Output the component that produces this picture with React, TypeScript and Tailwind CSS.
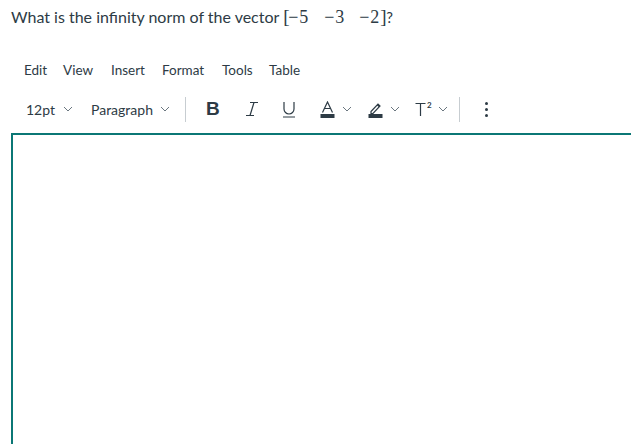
import React from "react";

const Chevron = () => (
  <svg width="10" height="6" viewBox="0 0 10 6" className="text-[#6b7780]">
    <path d="M1 1l4 4 4-4" fill="none" stroke="currentColor" strokeWidth="1" />
  </svg>
);

const serif = { fontFamily: "'Liberation Serif', 'DejaVu Serif', serif" };

export default function App() {
  return (
    <div className="w-[631px] h-[444px] overflow-hidden bg-white text-[#2d3b45]" style={{ fontFamily: "Lato, 'Noto Sans', sans-serif" }}>
      <div className="pl-[11px] pt-[6px] h-[28px] text-[16px] leading-[20px] flex items-center whitespace-nowrap">
        <span>What is the infinity norm of the vector</span>
        <span className="ml-[4px] flex items-center text-[18px] leading-[20px]" style={serif}>
          <span className="w-[4px] text-[19px]">[</span>
          <span className="w-[12px] text-center">−</span>
          <span className="w-[24px]">5</span>
          <span className="w-[12px] text-center">−</span>
          <span className="w-[23px]">3</span>
          <span className="w-[12px] text-center">−</span>
          <span className="w-[10px]">2</span>
          <span className="w-[6px] text-[19px]">]</span>
        </span>
        <span className="text-[15px]">?</span>
      </div>

      <div className="pl-[24px] mt-[32px] flex items-center text-[13.5px] h-[20px]">
        <span className="w-[39px]">Edit</span>
        <span className="w-[48px]">View</span>
        <span className="w-[51px]">Insert</span>
        <span className="w-[60px]">Format</span>
        <span className="w-[47px]">Tools</span>
        <span>Table</span>
      </div>

      <div className="pl-[26px] mt-[16px] flex items-center h-[26px] text-[14px]">
        <span className="w-[65px] flex items-center gap-[8px]">12pt <Chevron /></span>
        <span className="w-[94px] flex items-center gap-[7px]">Paragraph <Chevron /></span>
        <span className="w-px h-[25px] bg-[#c7cdd1]" />
        <span className="ml-[20px] w-[39px] font-bold text-[19px] leading-[20px]" style={{ fontFamily: "'Liberation Sans', sans-serif" }}>B</span>
        <span className="w-[37px] flex">
          <svg width="14" height="16" viewBox="0 0 14 16"><path d="M5 1.5h8M1 14.5h8M9 1.5l-4 13" fill="none" stroke="#2d3b45" strokeWidth="1.2" /></svg>
        </span>
        <span className="w-[38px] flex">
          <svg width="14" height="17" viewBox="0 0 14 17"><path d="M2 1v7a5 5 0 0 0 10 0V1M1 16h12" fill="none" stroke="#2d3b45" strokeWidth="1.2" /></svg>
        </span>
        <span className="w-[48px] flex items-center gap-[7px]">
          <svg width="15" height="17" viewBox="0 0 15 17"><path d="M2.5 11.5L7.5 1l5 10.5M4.3 7.5h6.4" fill="none" stroke="#2d3b45" strokeWidth="1.2" /><rect x="0.5" y="13" width="14" height="4" fill="#2d3b45" /></svg>
          <Chevron />
        </span>
        <span className="w-[47px] flex items-center gap-[7px]">
          <svg width="15" height="17" viewBox="0 0 15 17"><path d="M3 10.5l7-7.5 2 2-7 7.5H3z M9 3.5l2 2" fill="none" stroke="#2d3b45" strokeWidth="1.2" /><rect x="0.5" y="13" width="14" height="4" fill="#2d3b45" /></svg>
          <Chevron />
        </span>
        <span className="w-[44px] flex items-center gap-[6px]">
          <span className="flex items-start">
            <svg width="11" height="14" viewBox="0 0 11 14"><path d="M0.5 1.5h10M5.5 1.5V14" fill="none" stroke="#2d3b45" strokeWidth="1.2" /></svg>
            <span className="text-[8px] leading-[8px] font-bold -mt-[1px] ml-[1px]">2</span>
          </span>
          <Chevron />
        </span>
        <span className="w-px h-[25px] bg-[#c7cdd1]" />
        <span className="ml-[25px] flex flex-col gap-[3px]">
          <span className="w-[3px] h-[3px] rounded-full bg-[#2d3b45]" />
          <span className="w-[3px] h-[3px] rounded-full bg-[#2d3b45]" />
          <span className="w-[3px] h-[3px] rounded-full bg-[#2d3b45]" />
        </span>
      </div>

      <div className="ml-[11px] mt-[11px] w-[640px] h-[320px] border-l-2 border-t-2 border-[#0b7775]" />
    </div>
  );
}
